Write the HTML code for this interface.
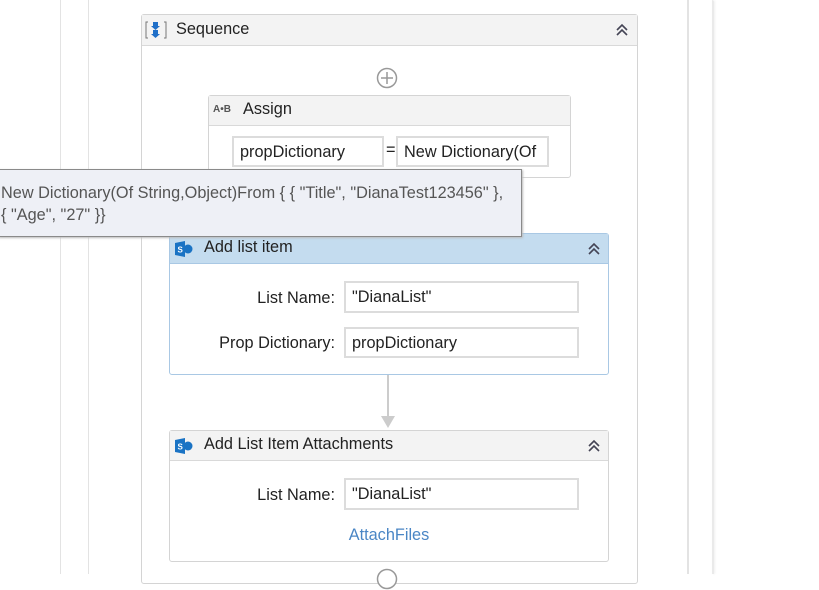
<!DOCTYPE html><html><head><style>
*{box-sizing:border-box;margin:0;padding:0}
body{width:819px;height:574px;overflow:hidden;background:#fff;font-family:"Liberation Sans",sans-serif;font-size:16.3px;color:#222;position:relative}
.a{position:absolute}
.box{position:absolute;border:1px solid #d4d4d4;border-radius:3px;background:#fff}
.hd{position:absolute;left:0;right:0;top:0;background:#f3f3f3;border-bottom:1px solid #d9d9d9}
.inp{position:absolute;border:2px solid #dcdcdc;background:#fff;padding-left:6px;line-height:28px;font-size:16.3px}
.lbl{position:absolute;text-align:right;font-size:16.3px}
</style></head><body>
<div class="a" style="left:60px;top:0;width:1px;height:574px;background:#e3e3e3"></div>
<div class="a" style="left:88px;top:0;width:1px;height:574px;background:#e3e3e3"></div>
<div class="a" style="left:687px;top:0;width:2px;height:574px;background:#e3e3e3"></div>
<div class="a" style="left:712px;top:0;width:2px;height:574px;background:#eaeaea;box-shadow:1px 0 2px #eee;border-radius:0 4px 0 0"></div>

<div class="box" style="left:141px;top:14px;width:497px;height:570px">
 <div class="hd" style="height:31px"></div>
 <svg class="a" style="left:3px;top:5px" width="22" height="20" viewBox="0 0 22 20"><path d="M3 2H1V18H3M19 2H21V18H19" stroke="#777" fill="none"/><path d="M8 2H13V6H15L10.5 10L6 6H8Z" fill="#1f6fc8"/><path d="M8 10H13V14H15L10.5 18L6 14H8Z" fill="#1f6fc8"/></svg>
 <div class="a" style="left:34px;top:5px">Sequence</div>
 <svg class="a" style="left:473px;top:8px" width="14" height="14" viewBox="0 0 14 14"><path d="M2 7L7 2L12 7M2 12L7 7L12 12" stroke="#445" stroke-width="1.6" fill="none"/></svg>
</div>
<svg class="a" style="left:376px;top:67px" width="22" height="22"><circle cx="11" cy="11" r="9.5" stroke="#999" stroke-width="1.5" fill="#fff"/><path d="M11 5V17M5 11H17" stroke="#999" stroke-width="1.5"/></svg>

<div class="box" style="left:208px;top:95px;width:363px;height:83px">
 <div class="hd" style="height:30px"></div>
 <div class="a" style="left:4px;top:8px;font-size:10px;font-weight:bold;color:#555">A•B</div>
 <div class="a" style="left:34px;top:4px">Assign</div>
 <div class="inp" style="left:23px;top:40px;width:152px;height:31px">propDictionary</div>
 <div class="a" style="left:177px;top:45px">=</div>
 <div class="inp" style="left:187px;top:40px;width:153px;height:31px;overflow:hidden;white-space:nowrap">New Dictionary(Of</div>
</div>

<div class="box" style="left:169px;top:233px;width:440px;height:142px;border-color:#a9c8e4">
 <div class="hd" style="height:30px;background:#c4dcef;border-bottom-color:#a9c8e4"></div>
 <svg class="a" style="left:4px;top:6px" width="20" height="18" viewBox="0 0 20 18"><circle cx="14" cy="9" r="4.5" fill="#1a73c4"/><path d="M1 3L11 1V17L1 15Z" fill="#1a73c4"/><text x="3.5" y="12.5" font-size="8" fill="#fff" font-family="Liberation Sans" font-weight="bold">S</text></svg>
 <div class="a" style="left:34px;top:4px">Add list item</div>
 <svg class="a" style="left:417px;top:8px" width="14" height="14" viewBox="0 0 14 14"><path d="M2 7L7 2L12 7M2 12L7 7L12 12" stroke="#445" stroke-width="1.6" fill="none"/></svg>
 <div class="lbl" style="left:0;width:165px;top:55px">List Name:</div>
 <div class="inp" style="left:174px;top:47px;width:235px;height:32px">"DianaList"</div>
 <div class="lbl" style="left:0;width:165px;top:100px">Prop Dictionary:</div>
 <div class="inp" style="left:174px;top:93px;width:235px;height:31px">propDictionary</div>
</div>

<div class="a" style="left:387px;top:375px;width:2px;height:43px;background:#ccc"></div>
<svg class="a" style="left:381px;top:416px" width="14" height="12"><path d="M0 0H14L7 12Z" fill="#ccc"/></svg>

<div class="box" style="left:169px;top:430px;width:440px;height:132px">
 <div class="hd" style="height:30px"></div>
 <svg class="a" style="left:4px;top:6px" width="20" height="18" viewBox="0 0 20 18"><circle cx="14" cy="9" r="4.5" fill="#1a73c4"/><path d="M1 3L11 1V17L1 15Z" fill="#1a73c4"/><text x="3.5" y="12.5" font-size="8" fill="#fff" font-family="Liberation Sans" font-weight="bold">S</text></svg>
 <div class="a" style="left:34px;top:4px">Add List Item Attachments</div>
 <svg class="a" style="left:417px;top:8px" width="14" height="14" viewBox="0 0 14 14"><path d="M2 7L7 2L12 7M2 12L7 7L12 12" stroke="#445" stroke-width="1.6" fill="none"/></svg>
 <div class="lbl" style="left:0;width:165px;top:55px">List Name:</div>
 <div class="inp" style="left:174px;top:47px;width:235px;height:32px">"DianaList"</div>
 <div class="a" style="left:0;width:438px;text-align:center;top:95px;color:#4a86c5">AttachFiles</div>
</div>
<svg class="a" style="left:376px;top:568px" width="22" height="22"><circle cx="11" cy="11" r="9.5" stroke="#999" stroke-width="1.5" fill="#fff"/></svg>

<div class="a" style="left:-2px;top:169px;width:524px;height:68px;background:#eef0f6;border:1px solid #8a8a8a;box-shadow:1px 1px 2px #bbb;color:#555;font-size:16.3px;line-height:22px;padding:12px 0 0 2px;white-space:nowrap">New Dictionary(Of String,Object)From { { "Title", "DianaTest123456" },<br>{ "Age", "27" }}</div>
</body></html>
